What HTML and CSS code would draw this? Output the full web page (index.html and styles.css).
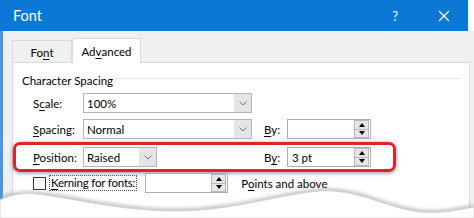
FILE: index.html
```html
<!DOCTYPE html>
<html>
<head>
    <title>Font</title>
    <link rel="stylesheet" href="styles.css">
</head>
<body>
    <div class="window">
        <div class="titlebar">
            <span class="title">Font</span>
            <span class="help">?</span>
            <svg class="close" width="12" height="12" viewBox="0 0 12 12">
                <path d="M1 1 L11 11 M11 1 L1 11" stroke="#fff" stroke-width="1.2" fill="none" />
            </svg>
        </div>
        <div class="dialog-body">
            <div class="tabs">
                <div class="tab">Fo<u>n</u>t</div>
                <div class="tab tab-active">Ad<u>v</u>anced</div>
            </div>
            <div class="panel">
                <div class="group-title">Character Spacing</div>

                <div class="row">
                    <span class="label">S<u>c</u>ale:</span>
                    <div class="combo combo-wide">
                        <span class="combo-text">100%</span>
                        <span class="combo-btn"><svg width="8" height="5" viewBox="0 0 8 5"><path d="M0.5 0.5 L4 4 L7.5 0.5" stroke="#707070" fill="none" /></svg></span>
                    </div>
                </div>

                <div class="row">
                    <span class="label"><u>S</u>pacing:</span>
                    <div class="combo combo-wide">
                        <span class="combo-text">Normal</span>
                        <span class="combo-btn"><svg width="8" height="5" viewBox="0 0 8 5"><path d="M0.5 0.5 L4 4 L7.5 0.5" stroke="#707070" fill="none" /></svg></span>
                    </div>
                    <span class="by-label"><u>B</u>y:</span>
                    <div class="spin">
                        <span class="spin-text"></span>
                        <span class="spin-btns"><span class="spin-up"></span><span class="spin-down"></span></span>
                    </div>
                </div>

                <div class="row highlight">
                    <span class="label"><u>P</u>osition:</span>
                    <div class="combo combo-short">
                        <span class="combo-text">Raised</span>
                        <span class="combo-btn"><svg width="8" height="5" viewBox="0 0 8 5"><path d="M0.5 0.5 L4 4 L7.5 0.5" stroke="#707070" fill="none" /></svg></span>
                    </div>
                    <span class="by-label">B<u>y</u>:</span>
                    <div class="spin">
                        <span class="spin-text">3 pt</span>
                        <span class="spin-btns"><span class="spin-up"></span><span class="spin-down"></span></span>
                    </div>
                </div>

                <div class="row kerning-row">
                    <span class="checkbox"></span>
                    <span class="kerning-label"><u>K</u>erning for fonts:</span>
                    <div class="spin spin-kern">
                        <span class="spin-text"></span>
                        <span class="spin-btns"><span class="spin-up"></span><span class="spin-down"></span></span>
                    </div>
                    <span class="points">P<u>o</u>ints and above</span>
                </div>
            </div>
        </div>
    </div>

    <svg class="torn" width="474" height="40" viewBox="0 0 474 40">
        <defs>
            <filter id="shade" x="-5%" y="-50%" width="110%" height="200%">
                <feGaussianBlur stdDeviation="2" />
            </filter>
        </defs>
        <path d="M0 22 C12 16 24 14 45 17 C80 22 120 32 170 33 C230 34 280 16 320 13 C360 11 385 30 420 34 C445 36 462 31 474 29"
              stroke="#9a9a9a" stroke-width="3" fill="none" filter="url(#shade)" />
        <path d="M0 22 C12 16 24 14 45 17 C80 22 120 32 170 33 C230 34 280 16 320 13 C360 11 385 30 420 34 C445 36 462 31 474 29 L474 40 L0 40 Z"
              fill="#fff" stroke="#d4d4d4" stroke-width="1" />
    </svg>
</body>
</html>
```

FILE: styles.css
```css
body {
    margin: 0;
    width: 474px;
    height: 218px;
    overflow: hidden;
    position: relative;
    background-color: #fff;
    font-family: Lato, "Liberation Sans", sans-serif;
    font-size: 11.5px;
    color: #000;
}

u {
    text-decoration-thickness: 1px;
    text-underline-offset: 2px;
}

.window {
    width: 468px;
}

.titlebar {
    height: 31px;
    background-color: #0a78d4;
    color: #fff;
    display: flex;
    align-items: center;
    padding-left: 13px;
}

.title {
    font-size: 14.5px;
    flex-grow: 1;
}

.help {
    font-size: 13px;
    margin-right: 40px;
}

.close {
    margin-right: 18px;
}

.dialog-body {
    width: 458px;
    height: 180px;
    overflow: hidden;
    background-color: #f0f0f0;
    border-left: 3px solid #4a98de;
    border-right: 2px solid #1a7fd6;
    padding: 7px 4px 0 9px;
}

.tabs {
    display: flex;
    align-items: flex-end;
}

.tab {
    width: 60px;
    height: 22px;
    box-sizing: border-box;
    border: 1px solid #d9d9d9;
    border-bottom: none;
    background-color: #f0f0f0;
    display: flex;
    align-items: center;
    justify-content: center;
    padding-top: 2px;
}

.tab-active {
    width: 69px;
    height: 25px;
    background-color: #fff;
    margin-bottom: -1px;
    position: relative;
    padding-top: 0;
}

.panel {
    background-color: #fff;
    border: 1px solid #d9d9d9;
    height: 144px;
    padding-top: 10px;
}

.group-title {
    display: flex;
    align-items: center;
    height: 14px;
    padding-left: 9px;
    margin-bottom: 6px;
}

.group-title::after {
    content: "";
    flex-grow: 1;
    border-top: 1px solid #e3e3e3;
    margin-left: 3px;
    margin-right: 8px;
    margin-top: -3px;
}

.row {
    display: flex;
    align-items: center;
    height: 20px;
    padding-left: 20px;
    margin-bottom: 6px;
}

.label {
    width: 50px;
}

.combo {
    height: 20px;
    box-sizing: border-box;
    border: 1px solid #b4b4b4;
    background-color: #fff;
    display: flex;
    align-items: center;
}

.combo-wide {
    width: 169px;
}

.combo-short {
    width: 74px;
    margin-right: 107px;
}

.combo-text {
    flex-grow: 1;
    padding-left: 3px;
}

.combo-btn {
    width: 17px;
    height: 18px;
    background-color: #e5e5e5;
    display: flex;
    align-items: center;
    justify-content: center;
}

.by-label {
    width: 23px;
    margin-left: 12px;
}

.highlight .by-label {
    margin-left: 0;
}

.spin {
    width: 84px;
    height: 20px;
    box-sizing: border-box;
    border: 1px solid #adadad;
    background-color: #fff;
    display: flex;
    align-items: center;
}

.spin-kern {
    width: 83px;
}

.spin-text {
    flex-grow: 1;
    padding-left: 4px;
}

.spin-btns {
    width: 15px;
    height: 18px;
    display: flex;
    flex-direction: column;
    margin-right: 1px;
}

.spin-up,
.spin-down {
    flex: 1;
    background-color: #e6e6e6;
    border: 1px solid #b9b9b9;
    display: flex;
    align-items: center;
    justify-content: center;
}

.spin-up {
    border-bottom: none;
}

.spin-up::after {
    content: "";
    border-left: 3.5px solid transparent;
    border-right: 3.5px solid transparent;
    border-bottom: 4px solid #000;
}

.spin-down::after {
    content: "";
    border-left: 3.5px solid transparent;
    border-right: 3.5px solid transparent;
    border-top: 4px solid #000;
}

.highlight {
    width: 360px;
    height: 24px;
    margin-top: -3px;
    margin-bottom: 1px;
    border: 3px solid #e1212b;
    border-radius: 7px;
    padding-left: 17px;
    box-shadow: 0 1px 4px rgba(0, 0, 0, 0.45);
}

.checkbox {
    width: 13px;
    height: 13px;
    box-sizing: border-box;
    border: 1px solid #333;
    background-color: #fff;
    margin-right: 3px;
}

.kerning-label {
    border: 1px dotted #555;
    padding: 0 1px;
    line-height: 14px;
    margin-right: 8px;
    letter-spacing: -0.2px;
}

.points {
    margin-left: 13px;
}

.torn {
    position: absolute;
    left: 0;
    top: 178px;
}
```
